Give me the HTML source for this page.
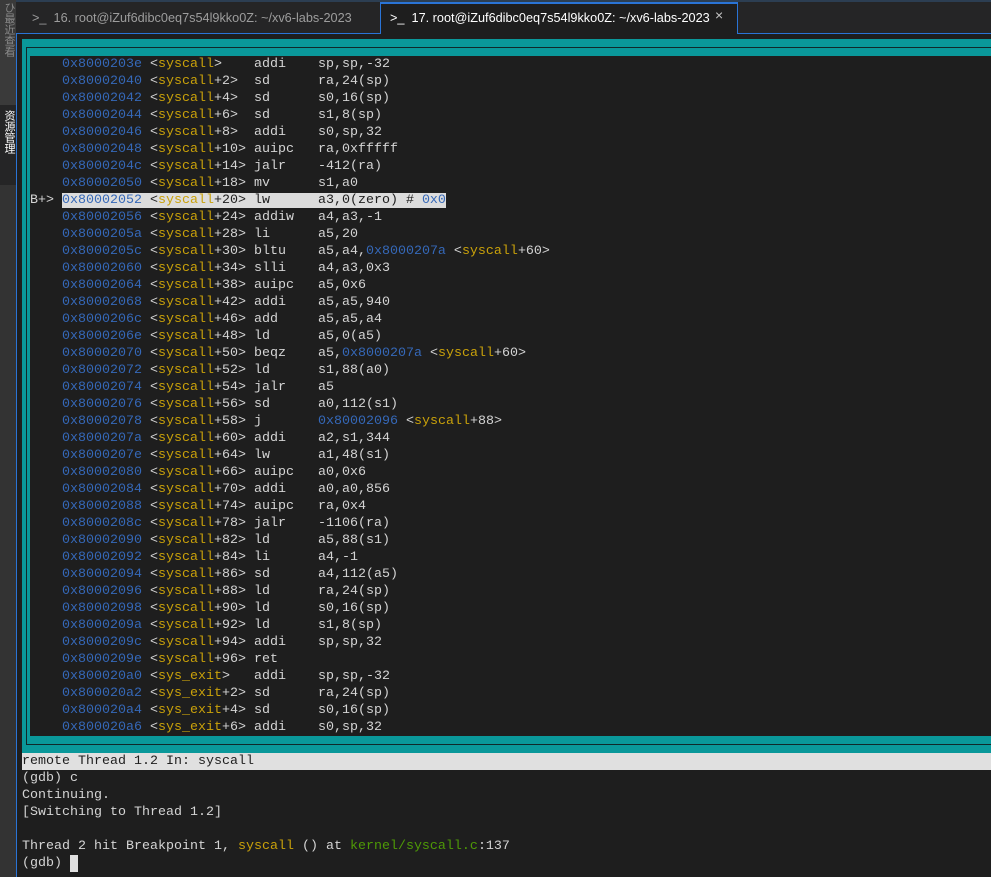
<!DOCTYPE html>
<html><head><meta charset="utf-8"><style>
*{margin:0;padding:0;box-sizing:border-box}
body{width:991px;height:877px;background:#1e1e1e;position:relative;overflow:hidden;font-family:"Liberation Mono",monospace;}
.abs{position:absolute}
.m{font-family:"Liberation Mono",monospace;font-size:13.33px;line-height:17px;white-space:pre;color:#d4d4d4}
.a{color:#3568b8}.y{color:#c9a10a}.g{color:#4e9a06}
.hl{background:#dcdcdc;color:#1e1e1e}
.tab{font-family:"Liberation Sans",sans-serif;font-size:12.7px;line-height:33px;white-space:pre}
.side{font-family:"Liberation Sans","Noto Sans CJK SC",sans-serif;font-size:11px;writing-mode:vertical-rl;}
</style></head><body>
<!-- tab bar -->
<div class="abs" style="left:0;top:0;width:991px;height:33px;background:#252526"></div>
<div class="abs" style="left:0;top:0;width:991px;height:2px;background:#2c3e52"></div>
<div class="abs tab" style="left:32px;top:2px;color:#9d9d9d">&gt;_  16. root@iZuf6dibc0eq7s54l9kko0Z: ~/xv6-labs-2023</div>
<div class="abs" style="left:380px;top:2px;width:358px;height:32px;background:#1e1e1e;border:1px solid #2a74d6;border-bottom:none;border-top:2px solid #2a74d6"></div>
<div class="abs tab" style="left:390px;top:2px;color:#ffffff">&gt;_  17. root@iZuf6dibc0eq7s54l9kko0Z: ~/xv6-labs-2023</div>
<div class="abs tab" style="left:715px;top:-1px;color:#c5c5c5;font-size:14px">×</div>
<!-- blue panel outline -->
<div class="abs" style="left:16px;top:33px;width:365px;height:1px;background:#2a74d6"></div>
<div class="abs" style="left:737px;top:33px;width:254px;height:1px;background:#2a74d6"></div>
<div class="abs" style="left:16px;top:33px;width:1px;height:844px;background:#2a74d6"></div>
<!-- sidebar -->
<div class="abs" style="left:0;top:0;width:16px;height:877px;background:#333333"></div>
<div class="abs" style="left:0;top:0;width:16px;height:105px;background:#3a3a3a"></div>
<div class="abs" style="left:0;top:105px;width:16px;height:80px;background:#252526"></div>
<div class="abs side" style="left:1px;top:2px;color:#8a8a8a">ひ最近查看</div>
<div class="abs side" style="left:1px;top:110px;color:#ffffff">资源管理</div>
<!-- teal frame -->
<div class="abs" style="left:22px;top:39px;width:969px;height:714px;background:#0a989a"></div>
<div class="abs" style="left:26px;top:47px;width:965px;height:698px;border:1px solid #10282a;border-right:none"></div>
<div class="abs" style="left:30px;top:56px;width:961px;height:680px;background:#1e1e1e"></div>
<!-- asm -->
<div class="abs m" style="left:30px;top:56px">    <span class="a">0x8000203e</span> &lt;<span class="y">syscall</span>&gt;    addi    sp,sp,-32
    <span class="a">0x80002040</span> &lt;<span class="y">syscall</span>+2&gt;  sd      ra,24(sp)
    <span class="a">0x80002042</span> &lt;<span class="y">syscall</span>+4&gt;  sd      s0,16(sp)
    <span class="a">0x80002044</span> &lt;<span class="y">syscall</span>+6&gt;  sd      s1,8(sp)
    <span class="a">0x80002046</span> &lt;<span class="y">syscall</span>+8&gt;  addi    s0,sp,32
    <span class="a">0x80002048</span> &lt;<span class="y">syscall</span>+10&gt; auipc   ra,0xfffff
    <span class="a">0x8000204c</span> &lt;<span class="y">syscall</span>+14&gt; jalr    -412(ra)
    <span class="a">0x80002050</span> &lt;<span class="y">syscall</span>+18&gt; mv      s1,a0
B+&gt; <span class="hl"><span class="a">0x80002052</span> &lt;<span class="y">syscall</span>+20&gt; lw      a3,0(zero) # <span class="a">0x0</span></span>
    <span class="a">0x80002056</span> &lt;<span class="y">syscall</span>+24&gt; addiw   a4,a3,-1
    <span class="a">0x8000205a</span> &lt;<span class="y">syscall</span>+28&gt; li      a5,20
    <span class="a">0x8000205c</span> &lt;<span class="y">syscall</span>+30&gt; bltu    a5,a4,<span class="a">0x8000207a</span> &lt;<span class="y">syscall</span>+60&gt;
    <span class="a">0x80002060</span> &lt;<span class="y">syscall</span>+34&gt; slli    a4,a3,0x3
    <span class="a">0x80002064</span> &lt;<span class="y">syscall</span>+38&gt; auipc   a5,0x6
    <span class="a">0x80002068</span> &lt;<span class="y">syscall</span>+42&gt; addi    a5,a5,940
    <span class="a">0x8000206c</span> &lt;<span class="y">syscall</span>+46&gt; add     a5,a5,a4
    <span class="a">0x8000206e</span> &lt;<span class="y">syscall</span>+48&gt; ld      a5,0(a5)
    <span class="a">0x80002070</span> &lt;<span class="y">syscall</span>+50&gt; beqz    a5,<span class="a">0x8000207a</span> &lt;<span class="y">syscall</span>+60&gt;
    <span class="a">0x80002072</span> &lt;<span class="y">syscall</span>+52&gt; ld      s1,88(a0)
    <span class="a">0x80002074</span> &lt;<span class="y">syscall</span>+54&gt; jalr    a5
    <span class="a">0x80002076</span> &lt;<span class="y">syscall</span>+56&gt; sd      a0,112(s1)
    <span class="a">0x80002078</span> &lt;<span class="y">syscall</span>+58&gt; j       <span class="a">0x80002096</span> &lt;<span class="y">syscall</span>+88&gt;
    <span class="a">0x8000207a</span> &lt;<span class="y">syscall</span>+60&gt; addi    a2,s1,344
    <span class="a">0x8000207e</span> &lt;<span class="y">syscall</span>+64&gt; lw      a1,48(s1)
    <span class="a">0x80002080</span> &lt;<span class="y">syscall</span>+66&gt; auipc   a0,0x6
    <span class="a">0x80002084</span> &lt;<span class="y">syscall</span>+70&gt; addi    a0,a0,856
    <span class="a">0x80002088</span> &lt;<span class="y">syscall</span>+74&gt; auipc   ra,0x4
    <span class="a">0x8000208c</span> &lt;<span class="y">syscall</span>+78&gt; jalr    -1106(ra)
    <span class="a">0x80002090</span> &lt;<span class="y">syscall</span>+82&gt; ld      a5,88(s1)
    <span class="a">0x80002092</span> &lt;<span class="y">syscall</span>+84&gt; li      a4,-1
    <span class="a">0x80002094</span> &lt;<span class="y">syscall</span>+86&gt; sd      a4,112(a5)
    <span class="a">0x80002096</span> &lt;<span class="y">syscall</span>+88&gt; ld      ra,24(sp)
    <span class="a">0x80002098</span> &lt;<span class="y">syscall</span>+90&gt; ld      s0,16(sp)
    <span class="a">0x8000209a</span> &lt;<span class="y">syscall</span>+92&gt; ld      s1,8(sp)
    <span class="a">0x8000209c</span> &lt;<span class="y">syscall</span>+94&gt; addi    sp,sp,32
    <span class="a">0x8000209e</span> &lt;<span class="y">syscall</span>+96&gt; ret
    <span class="a">0x800020a0</span> &lt;<span class="y">sys_exit</span>&gt;   addi    sp,sp,-32
    <span class="a">0x800020a2</span> &lt;<span class="y">sys_exit</span>+2&gt; sd      ra,24(sp)
    <span class="a">0x800020a4</span> &lt;<span class="y">sys_exit</span>+4&gt; sd      s0,16(sp)
    <span class="a">0x800020a6</span> &lt;<span class="y">sys_exit</span>+6&gt; addi    s0,sp,32</div>
<!-- status -->
<div class="abs" style="left:22px;top:753px;width:969px;height:17px;background:#e0e0e0"></div>
<div class="abs m" style="left:22px;top:753px;color:#1e1e1e">remote Thread 1.2 In: syscall</div>
<div class="abs m" style="left:22px;top:770px">(gdb) c
Continuing.
[Switching to Thread 1.2]

Thread 2 hit Breakpoint 1, <span class="y">syscall</span> () at <span class="g">kernel/syscall.c</span>:137
(gdb) </div>
<div class="abs" style="left:70px;top:855px;width:8px;height:17px;background:#e0e0e0"></div>
</body></html>
